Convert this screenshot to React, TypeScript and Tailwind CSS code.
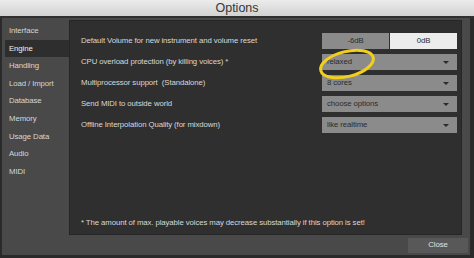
import React from 'react'

const sideItems = ['Interface', 'Engine', 'Handling', 'Load / Import', 'Database', 'Memory', 'Usage Data', 'Audio', 'MIDI']

const Dropdown = ({ value }: { value: string }) => (
    <div className="flex h-[16px] w-[135px] items-center justify-between bg-[#8b8b8b] pl-[5px] pr-[8px] text-[#2b2b2b]">
        <span>{value}</span>
        <span className="h-0 w-0 border-x-[3px] border-t-[3px] border-x-transparent border-t-[#2a2a2a]" />
    </div>
)

export default function App() {
    return (
        <div
            className="relative flex h-[258px] w-[474px] flex-col overflow-hidden bg-[#2a2a2a] text-[7.8px] tracking-[-0.1px]"
            style={{ fontFamily: '"Liberation Sans", sans-serif' }}
        >
            {/* title bar */}
            <div className="flex h-[18px] items-center justify-center border-b-2 border-[#303030] bg-gradient-to-b from-[#ececec] to-[#d2d2d2] text-[12.5px] tracking-normal text-[#363636]">
                Options
            </div>

            <div className="mb-[3px] ml-[2px] mr-[4px] flex flex-1 bg-[#494949]">
                <nav className="flex w-[67px] flex-col pt-[4px] pl-[3px] text-[#d6d6d6]">
                    {sideItems.map((item) => (
                        <div
                            key={item}
                            className={item === 'Engine' ? 'flex h-[17.6px] items-center bg-[#2e2e2e] pl-[4px] text-[#f0f0f0]' : 'flex h-[17.6px] items-center pl-[4px]'}
                        >
                            {item}
                        </div>
                    ))}
                </nav>

                <div className="flex flex-1 flex-col pt-[2px]">
                    <div className="mr-[8px] flex flex-1 flex-col border border-[#262626] bg-[#2f2f2f] pl-[11px] pr-[4px] pt-[12px] pb-[5px] text-[#d8d8d8]">
                        <div className="flex flex-col gap-[5px]">
                            <div className="flex items-center justify-between">
                                <span>Default Volume for new instrument and volume reset</span>
                                <div className="flex h-[16px] w-[135px]">
                                    <div className="flex w-[67px] items-center justify-center bg-[#8b8b8b] text-[#2b2b2b]">-6dB</div>
                                    <div className="ml-[1px] flex flex-1 items-center justify-center bg-[#ececec] text-[#2b2b2b]">0dB</div>
                                </div>
                            </div>
                            <div className="flex items-center justify-between">
                                <span>CPU overload protection (by killing voices) *</span>
                                <Dropdown value="relaxed" />
                            </div>
                            <div className="flex items-center justify-between">
                                <span>Multiprocessor support&nbsp; (Standalone)</span>
                                <Dropdown value="8 cores" />
                            </div>
                            <div className="flex items-center justify-between">
                                <span>Send MIDI to outside world</span>
                                <Dropdown value="choose options" />
                            </div>
                            <div className="flex items-center justify-between">
                                <span>Offline Interpolation Quality (for mixdown)</span>
                                <Dropdown value="like realtime" />
                            </div>
                        </div>
                        <div className="mt-auto">* The amount of max. playable voices may decrease substantially if this option is set!</div>
                    </div>
                    <div className="flex h-[20px] items-center justify-end pr-[2px]">
                        <button className="h-[15px] w-[60px] bg-[#585858] text-[#e0e0e0]">Close</button>
                    </div>
                </div>
            </div>

            {/* yellow annotation ring */}
            <svg className="absolute left-[315px] top-[46px]" width="64" height="36" viewBox="0 0 64 36">
                <ellipse cx="32" cy="18" rx="27" ry="12.5" fill="none" stroke="#f2cf1c" strokeWidth="3" transform="rotate(-14 32 18)" />
            </svg>
        </div>
    )
}
